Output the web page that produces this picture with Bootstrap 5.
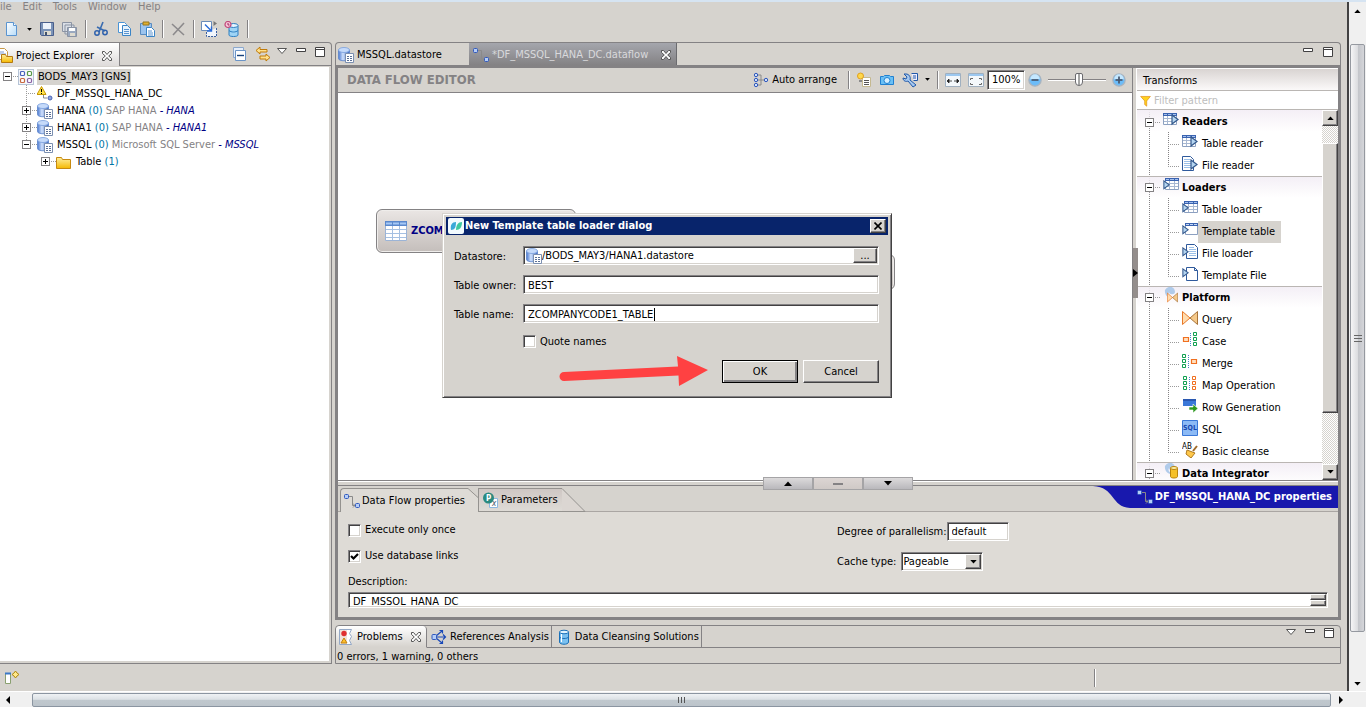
<!DOCTYPE html>
<html lang="en">
<head>
<meta charset="utf-8">
<meta name="viewport" content="width=device-width, initial-scale=1">
<title>DF_MSSQL_HANA_DC - Data Flow Editor</title>
<link href="https://cdn.jsdelivr.net/npm/bootstrap@5.3.0/dist/css/bootstrap.min.css" rel="stylesheet">
<style>
:root{--face:#d6d3ce;--edge:#848284;--dark:#424142;--navy:#08246b}
body{font-family:"DejaVu Sans Condensed","DejaVu Sans",sans-serif;font-size:11px;line-height:14px;color:#000;background:var(--face)}
svg{display:block;flex:none}
button,input,select,textarea{font:inherit;color:inherit;border-radius:0;outline:0}
button{background:none;border:0;padding:0}
a{color:inherit;text-decoration:none}
.ic{width:16px;height:16px}
.g7{gap:7px}.g3{gap:3px}
.grow0{min-height:0;min-width:0}
.skyline{height:2px;background:#d6e4f2}
.app{border-right:2px solid var(--dark)}
.menus{height:14px;gap:11px;color:var(--edge);line-height:10px}
.tools{height:26px;padding-left:4px}
.vsep{width:2px;height:18px;background:linear-gradient(90deg,var(--edge) 50%,#fff 50%);margin-right:-1px}
.work{gap:3px;padding-right:6px}
/* project explorer */
.explorer{width:332px;border-top:1px solid var(--edge);border-right:1px solid var(--edge);border-bottom:1px solid var(--edge);border-top-right-radius:4px}
.phead{height:24px}
.ptab{height:23px;background:linear-gradient(#fff,#dedbda);border-right:1px solid var(--edge);padding-right:6px;padding-top:2px;gap:7px}
.pline{border-bottom:1px solid var(--edge);height:23px;padding-right:3px}
.tree{background:#fff;margin-right:2px;margin-bottom:2px;padding-top:1px}
.tree ul{list-style:none;margin:0;padding:0}
.trow{height:17px;gap:4px}
.lv0{padding-left:3px}.lv1{padding-left:22px}.lv2{padding-left:41px}
.kids{background:repeating-linear-gradient(#9a9a9a 0 1px,transparent 1px 2px) 26px 0/1px 61px no-repeat}
.hd{width:5px;height:1px;margin-left:-3px;margin-right:-4px;background:repeating-linear-gradient(90deg,#9a9a9a 0 1px,transparent 1px 2px)}
.hd.wide{width:10px;margin-left:4px;margin-right:-3px}
.ex{width:9px;height:9px;border:1px solid var(--edge);background:linear-gradient(#000,#000) 1px 3px/5px 1px no-repeat #fff;flex:none}
.ex.plus{background:linear-gradient(#000,#000) 1px 3px/5px 1px no-repeat,linear-gradient(#000,#000) 3px 1px/1px 5px no-repeat #fff}
.picked{background:var(--face);padding:1px;margin-left:-1px}
.cnt{color:#0075a5}.kind{color:#848284}.conn{color:#000084;font-style:italic}
/* editor */
.frame{border-top:1px solid var(--edge);border-left:1px solid var(--edge);border-right:1px solid var(--edge);border-radius:4px 4px 0 0}
.etabs{height:22px}
.etab{width:133px;padding-left:2px;padding-top:2px;gap:3px}
.etab.on{width:208px;background:linear-gradient(#a5a6ad,#848284);color:#d9d9dc;border-right:1px solid #6b6b6f;padding-left:4px}
.inner{border:3px solid var(--edge);border-left-width:2px;border-right-width:2px}
.ehead{height:25px;border-bottom:1px solid var(--edge);padding-left:9px;padding-right:6px;padding-bottom:1px}
.ehead h1{font-size:13px;font-weight:700;color:var(--edge);margin:0;line-height:16px}
.sunk{background:#fff;border:1px solid;border-color:#848284 #fff #fff #848284;box-shadow:inset 1px 1px #424142,inset -1px -1px #d6d3ce}
.raised{background:var(--face);border:1px solid;border-color:#fff #424142 #424142 #fff;box-shadow:inset -1px -1px #848284}
.zoombox{width:38px;height:20px;padding:0 0 0 4px}
.slide{appearance:none;width:58px;height:14px;background:linear-gradient(#fff,#fff) 0 7px/100% 1px no-repeat,linear-gradient(var(--edge),var(--edge)) 0 6px/100% 1px no-repeat;margin:0 3px}
.slide::-webkit-slider-thumb{appearance:none;width:8px;height:13px;border:1px solid #6b6b6f;border-radius:2px 2px 4px 4px;background:linear-gradient(90deg,#fff 30%,#a5a6a5 30% 70%,#fff 70%)}
.canvas{background:#fff}
.node{border:1px solid var(--edge);border-radius:6px;background:linear-gradient(#eae6e4,#c4bebb);box-shadow:inset 0 0 0 1px #efedeb}
.sash{width:5px;background:var(--face);border-left:1px solid var(--edge);border-right:1px solid #fff}
.knob{left:0;top:180px;width:5px;height:50px;background:#948e8c}
/* dialog */
.dlg{left:104px;top:120px;width:450px;height:185px;background:var(--face);border:1px solid;border-color:#d6d3ce #424142 #424142 #d6d3ce;box-shadow:inset 1px 1px #fff,inset -1px -1px #848284;padding:3px}
.dlg label{padding-top:2px}
.dtitle{height:18px;background:var(--navy);color:#fff;font-weight:700;padding:0 2px;gap:1px}
.xbtn{width:16px;height:14px}
.dbody{padding:11px 9px 0 8px;gap:10px}
.dfield{height:19px}
.dfield label{width:69px}
.dfield .sunk{height:19px;padding:1px 4px 0}
.dfield div.sunk{padding:0 4px 0 2px}
.dots{width:24px;height:15px;margin-right:-3px}
.dbtns{gap:5px;padding-top:1px}
.dbtn{width:76px;height:23px}
.dbtn.main{outline:1px solid #000;outline-offset:-1px;border-color:#000;box-shadow:inset 1px 1px #fff,inset -2px -2px #848284}
.caretbar{position:absolute;left:211px;top:94px;width:1px;height:13px;background:#000}
.arrow{left:115px;top:141px}
.cb{appearance:none;width:13px;height:13px;margin:0;flex:none}
.cb:checked{background:#fff url("data:image/svg+xml,%3Csvg xmlns='http://www.w3.org/2000/svg' width='11' height='11'%3E%3Cpath d='M2 5l2.500 2.500L9 3' fill='none' stroke='black' stroke-width='2.200'/%3E%3C/svg%3E") 0 0 no-repeat}
/* palette */
.pal{width:201px;background:#fff}
.ptitle{height:23px;background:linear-gradient(#d9d4d2,#fbf9f9);border-top:1px solid #fff;border-bottom:1px solid #bab6b3;padding-left:6px;padding-top:2px}
.pfilter{height:19px;border-bottom:1px solid #bab6b3;padding-left:2px;padding-top:1px;gap:2px}
.pfilter input{border:0;width:150px;padding:0;background:none}
.pfilter input::placeholder{color:#bdbdbd;opacity:1}
.cats{background:repeating-linear-gradient(#848284 0 1px,transparent 1px 2px) 12px 0/1px 100% no-repeat}
.cat+.cat{border-top:1px solid #bab6b3}
.chead{height:22px;padding-left:8px;padding-top:2px;font-weight:700;background:linear-gradient(#f4eff6,transparent)}
.cat+.cat .chead{height:21px;padding-top:0}
.chead,.crow{gap:4px}
.chead .ic,.crow .ic{margin-bottom:5px}
.chead .ic{margin-left:3px;margin-right:-1px}
.crow{height:22px;padding-left:31px;padding-top:2px}
.crow .ic{margin-left:3px}
.crow .hd{width:11px;margin-left:0;margin-right:-4px}
.crows{background:repeating-linear-gradient(#848284 0 1px,transparent 1px 2px) 31px 0/1px calc(100% - 10px) no-repeat}
.crow .picked{padding:4px 6px 4px 4px;margin-left:-4px}
.sb{width:16px;background:repeating-conic-gradient(#fff 0 25%,#d6d3ce 0 50%) 0 0/2px 2px}
.sb .raised{width:16px}
/* properties */
.hsash{height:6px;background:var(--face);border-top:1px solid var(--edge);border-bottom:1px solid var(--edge);box-shadow:inset 0 1px #fff}
.knobs{left:425px;top:-4px}
.knobs button{width:50px;height:13px;background:linear-gradient(#dcdadb,#b9b8bc);border:1px solid #a5a4a6;line-height:9px}
.knobs button:nth-child(2){background:linear-gradient(#dcd5d3,#cfc9c6)}
.ptabs{height:26px;padding-top:2px;padding-left:2px;background:linear-gradient(#aaa6a3,#aaa6a3) 0 100%/100% 1px no-repeat}
.pt1{height:24px;background:#dedbd6;border-left:1px solid #94928f;border-top:1px solid #94928f;border-top-left-radius:4px;padding-left:3px;width:128px;gap:2px}
.pt2{height:24px;background:linear-gradient(#cfc7c4,#dedbd6);border:1px solid #94928f;border-right:0;padding-left:4px;width:84px;gap:2px}
.banner{height:22px;background:#1818ad;color:#fff;font-weight:700;padding-right:6px;gap:2px}
.pbody{background:#dedbd6;height:105px;padding:11px 10px 10px}
.desc{height:16px;margin-top:3px}
.desc textarea{resize:none;border:0;background:none;height:11px;line-height:16px;overflow:hidden;padding:0 4px;margin-top:1px}
.spin{width:16px;height:6px}
/* problems */
.problems{border:1px solid var(--edge);border-radius:4px 4px 0 0;height:39px;margin-top:5px}
.btabs{height:22px}
.btab{border-right:1px solid var(--edge);border-bottom:1px solid var(--edge);padding:0 2px 0 4px;gap:3px}
.btab.on{background:linear-gradient(#fff,var(--face));border-bottom-color:var(--face);width:91px;border-radius:4px 4px 0 0;padding-left:2px}
.bfill{border-bottom:1px solid var(--edge);padding-right:3px}
.msg{height:15px;line-height:18px;padding-left:1px;overflow:hidden}
.status{height:27px;padding-left:4px;padding-right:252px}
/* outer scroll bars */
.vs{width:17px;background:#f0f0f0;padding:7px 0 5px}
.vthumb{width:15px;border:1px solid #9599a0;border-radius:2px;background:linear-gradient(90deg,#f5f5f6,#dcdde0 50%,#c3c5ca 55%,#d5d6da)}
.hs{height:16px;background:#f0f0f0;border-top:1px solid #fff}
.hthumb{height:14px;border:1px solid #8b95a1;border-radius:2px;background:linear-gradient(#eff2f4,#dce1e5 45%,#c0c8ce 50%,#bcc4cb)}
</style>
</head>
<body class="vh-100 overflow-hidden d-flex flex-column">

<svg width="0" height="0" class="position-absolute" aria-hidden="true">
<defs>
<linearGradient id="cyl"><stop offset="0" stop-color="#4a78d0"/><stop offset=".4" stop-color="#cfe0fb"/><stop offset="1" stop-color="#3a66c4"/></linearGradient>
<linearGradient id="page" x2="1" y2="1"><stop offset="0" stop-color="#fff"/><stop offset="1" stop-color="#b8dcf8"/></linearGradient>
<linearGradient id="gold" x2="0" y2="1"><stop offset="0" stop-color="#fff0a0"/><stop offset="1" stop-color="#f5b800"/></linearGradient>
<symbol id="db" viewBox="0 0 16 16"><path d="M.5 3v8.500c0 3 11 3 11 0V3z" fill="url(#cyl)" stroke="#5a84cc" stroke-width=".8"/><ellipse cx="6" cy="3" rx="5.500" ry="2.500" fill="#c5dafa" stroke="#7a9fdc" stroke-width=".8"/><path d="M7.500 6.500h8v9h-8z" fill="#fff" stroke="#7b8fb0"/><path d="M9 9.500h2m1 0h2m-5 2h2m1 0h2m-5 2h2m1 0h2" stroke="#5a6f96"/></symbol>
<symbol id="flow" viewBox="0 0 16 16"><path d="M5 3.500h3.500v9H11" fill="none" stroke="#8a8a8a"/><path d="M9 10.500l2 2-2 2" fill="none" stroke="#8a8a8a"/><rect x=".5" y="1.500" width="4" height="4" rx="1" fill="#b5cdf7" stroke="#3159bd"/><rect x="11.500" y="10.500" width="4" height="4" rx="1" fill="#b5cdf7" stroke="#3159bd"/></symbol>
<symbol id="warn" viewBox="0 0 16 16"><path d="M6.500 8v4H10" fill="none" stroke="#8a8a8a"/><rect x="11" y="10" width="4" height="4" rx="2" fill="#8ca6e0" stroke="#4a63b5"/><path d="M4.500 .5l4.500 8H0z" fill="#ffe34a" stroke="#c79600"/><path d="M4.500 3v3m0 1v1" stroke="#000"/></symbol>
<symbol id="proj" viewBox="0 0 16 16"><rect x=".5" y=".5" width="15" height="15" fill="#f5f7fb" stroke="#b5c3d6"/><g fill="#fff" stroke-width="1.200"><rect x="2.500" y="2.500" width="4" height="4" rx="1" stroke="#4a63bd"/><rect x="9.500" y="2.500" width="4" height="4" rx="1" stroke="#5a9a4a"/><rect x="2.500" y="9.500" width="4" height="4" rx="1" stroke="#c76a42"/><rect x="9.500" y="9.500" width="4" height="4" rx="1" stroke="#8a63a5"/></g></symbol>
<symbol id="folder" viewBox="0 0 16 16"><path d="M.5 3.500h5l1 2h8v9H.5z" fill="url(#gold)" stroke="#c78a10"/></symbol>
<symbol id="folders" viewBox="0 0 16 16"><path d="M1.500 .5h6l3 3v8h-9z" fill="#fff" stroke="#c79a4a"/><path d="M3 4h4M3 6h6" stroke="#7a9ad0"/><path d="M4.500 6.500h4l1 2h6v6h-11z" fill="url(#gold)" stroke="#b57a10"/></symbol>
<symbol id="new" viewBox="0 0 16 16"><path d="M2.500 1.500h7l3 3v10h-10z" fill="url(#page)" stroke="#5a94d0"/><path d="M9.500 1.500v3h3" fill="#fff" stroke="#5a94d0"/></symbol>
<symbol id="save" viewBox="0 0 16 16"><path d="M1.500 1.500h13v13h-12l-1-1z" fill="#7b93b8" stroke="#4a5f8c"/><path d="M4 2h8v6H4z" fill="#eef3fb"/><path d="M5 10h7v4H5z" fill="#dedbd0"/><path d="M6 11h2v3H6z" fill="#42526b"/></symbol>
<symbol id="saveall" viewBox="0 0 16 16"><g fill="#d9dee6" stroke="#8a93a3"><path d="M.5 1.500h9v9h-9zM3 4h9v9H3z"/><path d="M5.500 6.500h9v9h-9z" fill="#9aa9c0"/></g><path d="M7 7h6v3H7z" fill="#fff"/><path d="M8 12h5v3H8z" fill="#dedbd0"/></symbol>
<symbol id="cut" viewBox="0 0 16 16"><path d="M10 1L6 11M4 6l8 4" stroke="#3a6cb0" stroke-width="1.600"/><circle cx="4" cy="12" r="2.200" fill="none" stroke="#2f62ad" stroke-width="1.500"/><circle cx="12" cy="11.500" r="2.200" fill="none" stroke="#2f62ad" stroke-width="1.500"/></symbol>
<symbol id="copy" viewBox="0 0 16 16"><path d="M2.500 1.500h6l2 2v8h-8z" fill="#fff" stroke="#4a94d6"/><path d="M6.500 4.500h5l3 3v7h-8z" fill="#e5f2fd" stroke="#3a84c6"/><path d="M8 8.500h5M8 10.500h5M8 12.500h5" stroke="#5a94d0"/></symbol>
<symbol id="paste" viewBox="0 0 16 16"><path d="M1.500 2.500h11v11h-11z" fill="#9cc4ee" stroke="#5a8cc0"/><path d="M4 1h6v3H4z" fill="#e0b030" stroke="#96741c"/><path d="M7.500 6.500h5l3 3v6h-8z" fill="#fff" stroke="#3a84c6"/><path d="M9 10h4m-4 2h5m-5 2h5" stroke="#5a94d0"/></symbol>
<symbol id="del" viewBox="0 0 16 16"><path d="M2 3l12 11M14 2L3 14" stroke="#8c8a8c" stroke-width="1.600"/></symbol>
<symbol id="act" viewBox="0 0 16 16"><path d="M.5 .5h10v9H.5z" fill="#fff" stroke="#6b8cb8"/><path d="M15.500 7v8.500h-10V11" fill="#f2f6fc" stroke="#3a5fa0" stroke-dasharray="2 1"/><path d="M4 3.500l6 6m.5-4v4.500H6" fill="none" stroke="#2a6cd8" stroke-width="1.400"/><path d="M12.500 0L16 2.500 12.500 5z" fill="#777"/></symbol>
<symbol id="dbclock" viewBox="0 0 16 16"><path d="M5 4.500V14c0 2 9 2 9 0V4.500z" fill="#9fd4f5" stroke="#2f7fc0"/><ellipse cx="9.500" cy="4.500" rx="4.500" ry="2" fill="#e5f5ff" stroke="#2f7fc0"/><path d="M5 9.500c2 2 7 2 9 0" fill="none" stroke="#2f7fc0"/><circle cx="4" cy="3.500" r="3" fill="#f7c5d8" stroke="#c0487a" stroke-width="1.200"/><path d="M4 2v2h1.500" fill="none" stroke="#a02a60"/></symbol>
<symbol id="collapse" viewBox="0 0 16 16"><path d="M1.500 1.500h10v10h-10z" fill="#e5eefa" stroke="#8ca8cc"/><path d="M3.500 4.500h10v10h-10z" fill="#fff" stroke="#6b94c6"/><path d="M5 9.500h7" stroke="#18427b" stroke-width="1.400"/></symbol>
<symbol id="link" viewBox="0 0 16 16"><path d="M5 1L1 4.500 5 8V6h7V3.500H5zM11 8l4 3.500-4 3.500v-2H5v-3h6z" fill="#ffe08a" stroke="#c07a08"/></symbol>
<symbol id="tri" viewBox="0 0 16 16"><path d="M3.500 4.500h9l-4.500 5z" fill="#fff" stroke="#555"/></symbol>
<symbol id="min" viewBox="0 0 16 16"><path d="M3.500 4.500h9v3h-9z" fill="#fff" stroke="#424142"/></symbol>
<symbol id="max" viewBox="0 0 16 16"><path d="M3.500 3.500h9v9h-9z" fill="#fff" stroke="#424142"/><path d="M3 5.500h10" stroke="#424142"/></symbol>
<symbol id="close" viewBox="0 0 12 12"><path d="M1.500 1.500h2L6 4.500l2.500-3h2v2L7.700 6l2.800 2.500v2h-2L6 7.500l-2.500 3h-2v-2L4.300 6 1.500 3.500z" fill="#fff" stroke="#555"/></symbol>
<symbol id="auto" viewBox="0 0 16 16"><path d="M5 3h3v10H5M5 8h6" fill="none" stroke="#8a8a8a"/><g fill="#d0e0fa" stroke="#3159bd"><circle cx="3" cy="3" r="1.700"/><circle cx="3" cy="8" r="1.700"/><circle cx="3" cy="13" r="1.700"/><circle cx="13" cy="8" r="1.700"/></g></symbol>
<symbol id="tip" viewBox="0 0 16 16"><path d="M6.500 5.500h8v9h-8z" fill="#fff" stroke="#c5b990"/><path d="M8 8.500h5m-5 2h5m-5 2h5" stroke="#555"/><circle cx="4.500" cy="4" r="3" fill="#ffd84a" stroke="#e0a020"/><path d="M3 8h3v2H3z" fill="#8a8a8a"/></symbol>
<symbol id="cam" viewBox="0 0 16 16"><path d="M1.500 4.500h3l1-1h5l1 1h3v8h-13z" fill="#6ac0f5" stroke="#2080d0"/><circle cx="8" cy="8.500" r="3" fill="#d5efff" stroke="#2080d0"/></symbol>
<symbol id="wrench" viewBox="0 0 16 16"><path d="M2 2l3 3-1 2-3-1c0 3 3 4 5 3l5 6 3-2-6-5c1-3-1-6-4-6z" fill="#a5c8f0" stroke="#2058a8"/><path d="M9.500 1.500h6v7h-4" fill="#eef" stroke="#2058a8"/><path d="M11 4h3m-3 2h3" stroke="#2058a8"/></symbol>
<symbol id="fitw" viewBox="0 0 16 16"><path d="M.5 1.500h15v13H.5z" fill="#f4f8fb" stroke="#a0b0c0"/><path d="M1 3h14" stroke="#9cc8f0" stroke-width="2"/><path d="M4 7L2 9l2 2zM12 7l2 2-2 2zM3 9h4m2 0h4" fill="#222" stroke="#222" stroke-width=".8"/></symbol>
<symbol id="fitp" viewBox="0 0 16 16"><path d="M.5 1.500h15v13H.5z" fill="#f4f8fb" stroke="#a0b0c0"/><path d="M1 3h14" stroke="#9cc8f0" stroke-width="2"/><path d="M2.500 8V6.500H5m6 0h2.500V8m0 3v1.500H11m-6 0H2.500V11" fill="none" stroke="#666"/></symbol>
<symbol id="zm" viewBox="0 0 16 16"><circle cx="8" cy="8" r="7" fill="#6cbcf8" stroke="#a8b4c0" stroke-width="1.500"/><path d="M2.500 7a5.500 5.500 0 0 1 11 0z" fill="#c5e8ff"/><path d="M4 8h8" stroke="#4a5a70" stroke-width="2"/></symbol>
<symbol id="zp" viewBox="0 0 16 16"><use href="#zm"/><path d="M8 4v8" stroke="#4a5a70" stroke-width="2"/></symbol>
<symbol id="funnel" viewBox="0 0 16 16"><path d="M2 3h12L9.500 8.500V15L7 13V8.500z" fill="#ffd21e" stroke="#e08a10" stroke-width=".8"/></symbol>
<symbol id="tbl" viewBox="0 0 16 16"><path d="M.5 2.500h13v11H.5z" fill="#fff" stroke="#8ca0c0"/><path d="M0 3.500h14" stroke="#3a63b0" stroke-width="3"/><path d="M1 7.500h12M1 10.500h12M4.500 5v8M9.500 5v8" stroke="#a8b8d2"/><path d="M1 3.500h3m1 0h4m1 0h3" stroke="#a5c0ee"/></symbol>
<symbol id="tblbig" viewBox="0 0 22 20"><path d="M.5 .5h21v19H.5z" fill="#fff" stroke="#9cb4d6"/><path d="M0 0h22v5H0z" fill="#5a88cc"/><path d="M1 2.500h6m1 0h6m1 0h6" stroke="#a5c8f5" stroke-width="2"/><path d="M1 8.500h20m-20 4h20m-20 4h20M7.500 5v14m7-14v14" stroke="#a5c0e2"/></symbol>
<symbol id="pl" viewBox="0 0 16 16"><path d="M1 1l6 4.500L1 10z" fill="#b5d5f0" stroke="#34588c" stroke-width="1.200"/></symbol>
<symbol id="rtbl" viewBox="0 0 16 16"><use href="#tbl" width="16" height="16" y="-1"/><use href="#pl" width="16" height="16" x="8" y="2"/></symbol>
<symbol id="ltbl" viewBox="0 0 16 16"><use href="#tbl" width="16" height="16" x="2" y="-1"/><use href="#pl" width="14" height="14" x="0" y="3"/></symbol>
<symbol id="ltpl" viewBox="0 0 16 16"><path d="M3.500 1.500h12v11h-12z" fill="#fff" stroke="#8ca0c0"/><path d="M3 2.500h13" stroke="#3a63b0" stroke-width="3"/><path d="M4 2.500h3m1 0h3m1 0h3" stroke="#c5d8f6"/><use href="#pl" width="14" height="14" x="0" y="3"/></symbol>
<symbol id="rfile" viewBox="0 0 16 16"><path d="M.5 .5h8l3 3v11H.5z" fill="#fff" stroke="#2f5a9c"/><path d="M2 3.500h6m-6 2h7m-7 2h7m-7 2h7m-7 2h7" stroke="#9cc0e8"/><use href="#pl" width="16" height="16" x="8" y="3"/></symbol>
<symbol id="lfile" viewBox="0 0 16 16"><path d="M4.500 .5h8l3 3v11h-11z" fill="#fff" stroke="#2f5a9c"/><path d="M7 3.500h5m-5 2h7m-7 2h7m-7 2h7m-7 2h7" stroke="#9cc0e8"/><use href="#pl" width="14" height="14" x="0" y="3"/></symbol>
<symbol id="tfile" viewBox="0 0 16 16"><path d="M4.500 1.500h8l3 3v10h-11z" fill="#fff" stroke="#2f5a9c"/><path d="M12.500 1.500v3h3" fill="none" stroke="#2f5a9c"/><use href="#pl" width="14" height="14" x="0" y="2"/></symbol>
<symbol id="bow" viewBox="0 0 16 16"><path d="M.5 1.500v13L8 8z" fill="#ffdcae" stroke="#e87828"/><path d="M15.500 1.500v13L8 8z" fill="#f5c98a" stroke="#a8743a"/></symbol>
<symbol id="plat" viewBox="0 0 16 16"><path d="M2 3C5-2 12-1 12 5c0 3-6 3-6 0-2 4 3 6 6 5-3 3-11 0-10-7z" fill="#b0cbea"/><use href="#bow" width="11" height="11" x="4" y="5"/></symbol>
<symbol id="dint" viewBox="0 0 16 16"><path d="M2 3C5-2 12-1 12 5c0 3-6 3-6 0-2 4 3 6 6 5-3 3-11 0-10-7z" fill="#b0cbea"/><path d="M7.500 5v8.500c0 2 7 2 7 0V5z" fill="#f5c02a" stroke="#b88410"/><ellipse cx="11" cy="5" rx="3.500" ry="1.500" fill="#fff0a5" stroke="#b88410"/></symbol>
<symbol id="g3" viewBox="0 0 5 16"><path d="M.5 .5h3v3h-3zm0 5h3v3h-3zm0 5h3v3h-3z" fill="#fff" stroke="currentColor"/></symbol>
<symbol id="case" viewBox="0 0 16 16"><path d="M1.500 5.500h5v4h-5z" fill="#ffe0c0" stroke="#f07020" stroke-width="1.200"/><path d="M8.500 1v14" stroke="#4a84c6" stroke-dasharray="1 1"/><use href="#g3" width="5" height="16" x="11" color="#10a050"/></symbol>
<symbol id="merge" viewBox="0 0 16 16"><use href="#g3" width="5" height="16" x="0" color="#10a050"/><path d="M6.500 1v14" stroke="#4a84c6" stroke-dasharray="1 1"/><path d="M9.500 5.500h5v4h-5z" fill="#ffe0c0" stroke="#f07020" stroke-width="1.200"/></symbol>
<symbol id="mapop" viewBox="0 0 16 16"><use href="#g3" width="5" height="16" x="1" color="#10a050"/><path d="M7.500 1v14" stroke="#4a84c6" stroke-dasharray="1 1"/><use href="#g3" width="5" height="16" x="10" color="#f07020"/></symbol>
<symbol id="rowgen" viewBox="0 0 16 16"><path d="M1 1h13v7H1z" fill="#3a78d8"/><path d="M1 1h13v2H1z" fill="#2a58b0"/><path d="M7 9h4V6l5 4.500L11 15v-3H7z" fill="#2f9a20" stroke="#fff" stroke-width=".6"/></symbol>
<symbol id="sqli" viewBox="0 0 16 16"><path d="M.5 .5h15v15H.5z" fill="#8cbaf5" stroke="#3a78d8"/><text x="1" y="10" font-size="7" font-weight="bold" fill="#1848b0">SQL</text></symbol>
<symbol id="clean" viewBox="0 0 16 16"><text x="0" y="7" font-size="8" fill="#000">AB</text><path d="M15 4l-4 5" stroke="#a06a28" stroke-width="2"/><path d="M5 8l8 3-4 5-5-4z" fill="#ffc84a" stroke="#b07a20"/></symbol>
<symbol id="param" viewBox="0 0 16 16"><path d="M6.500 6.500h8v9h-8z" fill="#fff" stroke="#8cb8e0"/><text x="9" y="14" font-size="8" font-style="italic" fill="#456">x</text><circle cx="5.500" cy="6" r="5.500" fill="#2a8a80"/><text x="3" y="9" font-size="8" font-weight="bold" fill="#fff">P</text></symbol>
<symbol id="prob" viewBox="0 0 16 16"><path d="M1.500 .5h12l-2 4 2 3-2 4 2 4h-12z" fill="#fff" stroke="#94a8c6"/><path d="M2 1h7v14H2z" fill="#f0e2d8"/><circle cx="6" cy="4.500" r="2.700" fill="#e03030"/><path d="M6 9l3 5H3z" fill="#ffc02a" stroke="#c08010"/></symbol>
<symbol id="refs" viewBox="0 0 16 16"><path d="M4 8h10M12 5.500L14.500 8 12 10.500M5 7l6-5M8.500 1.500h3v3M5 9l6 5m-2.500 .5h3v-3" fill="none" stroke="#1848b8" stroke-width="1.200"/><rect x="1" y="5.500" width="4.500" height="5" rx="1" fill="#b5cdf7" stroke="#3159bd"/></symbol>
<symbol id="cyl2" viewBox="0 0 16 16"><path d="M3.500 3v10c0 3 9 3 9 0V3z" fill="#7ac0f0" stroke="#1a70b8"/><ellipse cx="8" cy="3" rx="4.500" ry="1.800" fill="#e0f4ff" stroke="#1a70b8"/><path d="M3.500 8c1 2 8 2 9 0" fill="none" stroke="#1a70b8"/><path d="M5.500 5v8" stroke="#fff"/></symbol>
<symbol id="fast" viewBox="0 0 16 16"><path d="M1.500 3.500h5v10h-5z" fill="#fff" stroke="#8aa070"/><path d="M1 3.500h6" stroke="#3a78c8" stroke-width="2"/><path d="M11.500 1l1.500 2 2 1.500-2 1.500-1.500 2L10 6 8 4.500 10 3z" fill="#ffe88a" stroke="#b08a10"/></symbol>
<symbol id="logo" viewBox="0 0 16 16"><rect width="16" height="16" rx="2" fill="#f2fafe"/><path d="M3 12c-1-5 1-8 5-8 0 5-1 8-5 8z" fill="#3aa8d8"/><path d="M8 12c0-5 2-8 6-8 0 5-2 8-6 8z" fill="#40c8a0"/></symbol>
<symbol id="dn" viewBox="0 0 8 5"><path d="M0 0h8L4 4.500z"/></symbol>
<symbol id="up" viewBox="0 0 8 5"><path d="M0 5h8L4 .5z"/></symbol>
</defs>
</svg>

<div class="skyline"></div>
<div class="d-flex flex-grow-1 grow0">
<div class="app d-flex flex-column flex-grow-1 grow0">
  <nav class="menus d-flex"><a href="#">ile</a><a href="#">Edit</a><a href="#">Tools</a><a href="#">Window</a><a href="#">Help</a></nav>
  <div class="tools d-flex align-items-center g7">
    <button aria-label="New"><svg class="ic"><use href="#new"/></svg></button>
    <svg width="5" height="3"><use href="#dn"/></svg>
    <button aria-label="Save"><svg class="ic"><use href="#save"/></svg></button>
    <button aria-label="Save all"><svg class="ic"><use href="#saveall"/></svg></button>
    <i class="vsep"></i>
    <button aria-label="Cut"><svg class="ic"><use href="#cut"/></svg></button>
    <button aria-label="Copy"><svg class="ic"><use href="#copy"/></svg></button>
    <button aria-label="Paste"><svg class="ic"><use href="#paste"/></svg></button>
    <i class="vsep"></i>
    <button aria-label="Delete"><svg class="ic"><use href="#del"/></svg></button>
    <i class="vsep"></i>
    <button aria-label="Execute"><svg class="ic"><use href="#act"/></svg></button>
    <button aria-label="Schedule"><svg class="ic"><use href="#dbclock"/></svg></button>
    <i class="vsep"></i>
  </div>

  <div class="work d-flex flex-grow-1 grow0">
    <aside class="explorer d-flex flex-column flex-shrink-0">
      <div class="phead d-flex">
        <div class="ptab d-flex align-items-center"><span class="d-flex align-items-center g3"><svg width="13" height="16" viewBox="3 0 13 16"><use href="#folders" width="16" height="16"/></svg>Project Explorer</span><svg width="12" height="12"><use href="#close"/></svg></div>
        <div class="pline flex-grow-1 d-flex justify-content-end align-items-center g3">
          <svg class="ic me-1"><use href="#collapse"/></svg><svg class="ic"><use href="#link"/></svg><svg class="ic mb-1"><use href="#tri"/></svg><svg class="ic mb-1"><use href="#min"/></svg><svg class="ic mb-1"><use href="#max"/></svg>
        </div>
      </div>
      <div class="tree flex-grow-1">
        <ul>
          <li><div class="trow lv0 d-flex align-items-center"><i class="ex"></i><i class="hd"></i><svg class="ic"><use href="#proj"/></svg><span class="picked">BODS_MAY3 [GNS]</span></div>
            <ul class="kids">
              <li class="trow lv1 d-flex align-items-center"><i class="hd wide"></i><svg class="ic"><use href="#warn"/></svg><span>DF_MSSQL_HANA_DC</span></li>
              <li class="trow lv1 d-flex align-items-center"><i class="ex plus"></i><i class="hd"></i><svg class="ic"><use href="#db"/></svg><span>HANA <span class="cnt">(0)</span> <span class="kind">SAP HANA</span> <span class="conn">- HANA</span></span></li>
              <li class="trow lv1 d-flex align-items-center"><i class="ex plus"></i><i class="hd"></i><svg class="ic"><use href="#db"/></svg><span>HANA1 <span class="cnt">(0)</span> <span class="kind">SAP HANA</span> <span class="conn">- HANA1</span></span></li>
              <li class="trow lv1 d-flex align-items-center"><i class="ex"></i><i class="hd"></i><svg class="ic"><use href="#db"/></svg><span>MSSQL <span class="cnt">(0)</span> <span class="kind">Microsoft SQL Server</span> <span class="conn">- MSSQL</span></span></li>
              <li class="trow lv2 d-flex align-items-center"><i class="ex plus"></i><i class="hd"></i><svg class="ic"><use href="#folder"/></svg><span>Table <span class="cnt">(1)</span></span></li>
            </ul>
          </li>
        </ul>
      </div>
    </aside>

    <main class="d-flex flex-column flex-grow-1 grow0">
      <section class="frame d-flex flex-column flex-grow-1 grow0">
        <div class="etabs d-flex align-items-center">
          <div class="etab d-flex align-items-center h-100"><svg class="ic"><use href="#db"/></svg>MSSQL.datastore</div>
          <div class="etab on d-flex align-items-center h-100"><svg class="ic"><use href="#flow"/></svg><span class="flex-grow-1">*DF_MSSQL_HANA_DC.dataflow</span><svg width="12" height="12" class="me-1"><use href="#close"/></svg></div>
          <div class="flex-grow-1"></div>
          <svg class="ic mb-1"><use href="#min"/></svg><svg class="ic mb-1 ms-1 me-1"><use href="#max"/></svg>
        </div>
        <div class="inner d-flex flex-column flex-grow-1 grow0">
          <div class="d-flex flex-grow-1 grow0">
            <div class="d-flex flex-column flex-grow-1 grow0">
              <div class="ehead d-flex align-items-center g7">
                <h1 class="flex-grow-1">DATA FLOW EDITOR</h1>
                <button class="d-flex align-items-center g3 me-1"><svg class="ic"><use href="#auto"/></svg>Auto arrange</button>
                <i class="vsep"></i>
                <button aria-label="Hints"><svg class="ic"><use href="#tip"/></svg></button>
                <button aria-label="Snapshot"><svg class="ic"><use href="#cam"/></svg></button>
                <button aria-label="Settings"><svg class="ic"><use href="#wrench"/></svg></button>
                <svg width="5" height="3"><use href="#dn"/></svg>
                <i class="vsep"></i>
                <button aria-label="Fit width"><svg class="ic"><use href="#fitw"/></svg></button>
                <div class="d-flex align-items-center g3">
                  <button aria-label="Fit page"><svg class="ic"><use href="#fitp"/></svg></button>
                  <input class="zoombox sunk" value="100%" aria-label="Zoom">
                  <svg width="14" height="14"><use href="#zm"/></svg>
                  <input type="range" class="slide" value="54" aria-label="Zoom level">
                  <svg width="14" height="14"><use href="#zp"/></svg>
                </div>
              </div>
              <div class="canvas flex-grow-1 position-relative">
                <div class="node position-absolute d-flex align-items-center" style="left:38px;top:116px;width:200px;height:44px;padding-left:8px"><svg class="me-1" width="22" height="20"><use href="#tblbig"/></svg><b style="color:#000084">ZCOM</b></div>
                <div class="node position-absolute" style="left:380px;top:161px;width:177px;height:36px"></div>
                <form class="dlg position-absolute" onsubmit="return false">
                  <div class="dtitle d-flex align-items-center"><svg class="ic"><use href="#logo"/></svg><span class="flex-grow-1">New Template table loader dialog</span><button type="button" class="xbtn raised d-flex align-items-center justify-content-center" aria-label="Close"><svg width="8" height="8"><path d="M.5 .5l7 7m0-7l-7 7" stroke="#000" stroke-width="1.600"/></svg></button></div>
                  <div class="dbody d-flex flex-column">
                    <div class="dfield d-flex align-items-center"><label for="ds">Datastore:</label><div class="sunk flex-grow-1 d-flex align-items-center"><svg class="ic"><use href="#db"/></svg><input id="ds" class="border-0 p-0 flex-grow-1 bg-transparent" value="/BODS_MAY3/HANA1.datastore"><button type="button" class="dots raised lh-1">...</button></div></div>
                    <div class="dfield d-flex align-items-center"><label for="own">Table owner:</label><input id="own" class="sunk flex-grow-1" value="BEST"></div>
                    <div class="dfield d-flex align-items-center"><label for="nam">Table name:</label><input id="nam" class="sunk flex-grow-1" value="ZCOMPANYCODE1_TABLE"></div>
                    <div class="d-flex align-items-center" style="padding-left:69px;gap:4px"><input type="checkbox" class="cb sunk" id="quo"><label for="quo">Quote names</label></div>
                    <div class="dbtns d-flex justify-content-end"><button class="dbtn main raised">OK</button><button type="button" class="dbtn raised">Cancel</button></div>
                  </div>
                  <i class="caretbar"></i>
                  <svg class="arrow position-absolute" width="151" height="32" viewBox="0 0 151 32"><path d="M6 17L120 11.500 119 1 150 15 121 31 120.500 20.500 6 26a4.500 4.500 0 0 1 0-9z" fill="#ff4142"/></svg>
                </form>
              </div>
            </div>
            <div class="sash position-relative"><div class="knob position-absolute d-flex align-items-center"><svg width="5" height="8"><path d="M0 0l5 4-5 4z"/></svg></div></div>
            <aside class="pal d-flex flex-column flex-shrink-0">
              <div class="ptitle d-flex align-items-center">Transforms</div>
              <div class="pfilter d-flex align-items-center"><svg width="13" height="13"><use href="#funnel"/></svg><input placeholder="Filter pattern" aria-label="Filter pattern"></div>
              <div class="d-flex flex-grow-1 grow0 overflow-hidden" style="height:0">
                <div class="cats flex-grow-1">
                  <div class="cat"><div class="chead d-flex align-items-center"><i class="ex"></i><i class="hd"></i><svg class="ic"><use href="#rtbl"/></svg>Readers</div>
                    <div class="crows">
                      <div class="crow d-flex align-items-center"><i class="hd"></i><svg class="ic"><use href="#rtbl"/></svg>Table reader</div>
                      <div class="crow d-flex align-items-center"><i class="hd"></i><svg class="ic"><use href="#rfile"/></svg>File reader</div>
                    </div></div>
                  <div class="cat"><div class="chead d-flex align-items-center"><i class="ex"></i><i class="hd"></i><svg class="ic"><use href="#ltbl"/></svg>Loaders</div>
                    <div class="crows">
                      <div class="crow d-flex align-items-center"><i class="hd"></i><svg class="ic"><use href="#ltbl"/></svg>Table loader</div>
                      <div class="crow d-flex align-items-center"><i class="hd"></i><svg class="ic"><use href="#ltpl"/></svg><span class="picked">Template table</span></div>
                      <div class="crow d-flex align-items-center"><i class="hd"></i><svg class="ic"><use href="#lfile"/></svg>File loader</div>
                      <div class="crow d-flex align-items-center"><i class="hd"></i><svg class="ic"><use href="#tfile"/></svg>Template File</div>
                    </div></div>
                  <div class="cat"><div class="chead d-flex align-items-center"><i class="ex"></i><i class="hd"></i><svg class="ic"><use href="#plat"/></svg>Platform</div>
                    <div class="crows">
                      <div class="crow d-flex align-items-center"><i class="hd"></i><svg class="ic"><use href="#bow"/></svg>Query</div>
                      <div class="crow d-flex align-items-center"><i class="hd"></i><svg class="ic"><use href="#case"/></svg>Case</div>
                      <div class="crow d-flex align-items-center"><i class="hd"></i><svg class="ic"><use href="#merge"/></svg>Merge</div>
                      <div class="crow d-flex align-items-center"><i class="hd"></i><svg class="ic"><use href="#mapop"/></svg>Map Operation</div>
                      <div class="crow d-flex align-items-center"><i class="hd"></i><svg class="ic"><use href="#rowgen"/></svg>Row Generation</div>
                      <div class="crow d-flex align-items-center"><i class="hd"></i><svg class="ic"><use href="#sqli"/></svg>SQL</div>
                      <div class="crow d-flex align-items-center"><i class="hd"></i><svg class="ic"><use href="#clean"/></svg>Basic cleanse</div>
                    </div></div>
                  <div class="cat"><div class="chead d-flex align-items-center"><i class="ex"></i><i class="hd"></i><svg class="ic"><use href="#dint"/></svg>Data Integrator</div></div>
                </div>
                <div class="sb d-flex flex-column flex-shrink-0">
                  <div class="raised d-flex align-items-center justify-content-center" style="height:16px"><svg width="7" height="4"><use href="#up"/></svg></div>
                  <div style="flex:17"></div><div class="raised" style="flex:270"></div><div style="flex:51"></div>
                  <div class="raised d-flex align-items-center justify-content-center" style="height:16px"><svg width="7" height="4"><use href="#dn"/></svg></div>
                </div>
              </div>
            </aside>
          </div>
          <div class="hsash position-relative"><div class="knobs position-absolute d-flex"><button aria-label="Up"><svg class="m-auto" width="8" height="5"><use href="#up"/></svg></button><button aria-label="Restore"><svg class="m-auto" width="10" height="2"><path d="M0 0h10v2H0z" fill="#848284"/></svg></button><button aria-label="Down"><svg class="m-auto" width="8" height="5"><use href="#dn"/></svg></button></div></div>
          <div class="ptabs d-flex">
            <div class="pt1 d-flex align-items-center"><svg class="ic"><use href="#flow"/></svg><span class="text-nowrap">Data Flow properties</span></div>
            <svg width="10" height="24"><path d="M0 0l10 10v14H0z" fill="#dedbd6"/><path d="M0 .5l10 9" stroke="#94928f"/></svg>
            <div class="pt2 d-flex align-items-center"><svg class="ic"><use href="#param"/></svg>Parameters</div>
            <svg width="24" height="24"><path d="M0 0l23 24H0z" fill="#dbd6d2"/><path d="M0 .5l23 23H0" fill="none" stroke="#94928f"/></svg>
            <div class="flex-grow-1"></div>
            <div class="d-flex" style="margin-top:-2px"><svg width="44" height="22"><path d="M0 0C22 1 18 21 37 22h7V0z" fill="#1818ad"/></svg><div class="banner d-flex align-items-center"><svg class="ic"><use href="#flow"/></svg>DF_MSSQL_HANA_DC properties</div></div>
          </div>
          <div class="pbody">
            <div class="d-flex">
              <div class="d-flex flex-column" style="width:489px;gap:12px">
                <div class="d-flex align-items-center gap-1"><input type="checkbox" class="cb sunk" id="once"><label for="once">Execute only once</label></div>
                <div class="d-flex align-items-center gap-1"><input type="checkbox" class="cb sunk" id="lnk" checked><label for="lnk">Use database links</label></div>
                <label for="dsc">Description:</label>
              </div>
              <div class="d-flex flex-column" style="gap:11px;margin-top:-1px">
                <div class="d-flex align-items-center"><label for="dop">Degree of parallelism:</label><input id="dop" class="sunk" style="width:62px;height:19px;padding:0 4px" value="default"></div>
                <div class="d-flex align-items-center" style="gap:5px"><label for="cch">Cache type:</label><div class="sunk d-flex" style="width:82px;height:19px;padding:1px"><select id="cch" class="border-0 bg-transparent flex-grow-1 p-0" style="appearance:none"><option>Pageable</option></select><span class="raised d-flex align-items-center justify-content-center" style="width:16px"><svg width="7" height="4"><use href="#dn"/></svg></span></div></div>
              </div>
            </div>
            <div class="desc sunk d-flex"><textarea id="dsc" class="flex-grow-1">DF_MSSQL_HANA_DC</textarea><div class="d-flex flex-column" style="margin:1px"><span class="spin raised"></span><span class="spin raised"></span></div></div>
          </div>
        </div>
      </section>

      <section class="problems">
        <div class="btabs d-flex">
          <div class="btab on d-flex align-items-center"><svg class="ic"><use href="#prob"/></svg>Problems<svg class="ms-1" width="12" height="12"><use href="#close"/></svg></div>
          <div class="btab d-flex align-items-center"><svg class="ic"><use href="#refs"/></svg>References Analysis</div>
          <div class="btab d-flex align-items-center"><svg class="ic"><use href="#cyl2"/></svg>Data Cleansing Solutions</div>
          <div class="bfill flex-grow-1 d-flex justify-content-end align-items-center g3"><svg class="ic mb-2"><use href="#tri"/></svg><svg class="ic mb-2"><use href="#min"/></svg><svg class="ic mb-2"><use href="#max"/></svg></div>
        </div>
        <div class="msg">0 errors, 1 warning, 0 others</div>
      </section>
    </main>
  </div>

  <div class="status d-flex align-items-center justify-content-between"><svg class="ic"><use href="#fast"/></svg><i class="vsep"></i></div>
</div>
<div class="vs d-flex flex-column align-items-center">
  <svg width="7" height="4"><use href="#up"/></svg>
  <div style="flex:31"></div>
  <div class="vthumb d-flex align-items-center justify-content-center" style="flex:587"><svg width="8" height="9"><path d="M0 1.500h8M0 4.500h8M0 7.500h8" stroke="#666"/></svg></div>
  <div style="flex:50"></div>
  <svg width="7" height="4"><use href="#dn"/></svg>
</div>
</div>
<div class="hs d-flex align-items-center">
  <svg width="32" height="8"><path d="M10 0v8L6 4z"/></svg>
  <div class="hthumb flex-grow-1 d-flex align-items-center justify-content-center"><svg width="9" height="6"><path d="M1.500 0v6M4.500 0v6M7.500 0v6" stroke="#555"/></svg></div>
  <svg width="35" height="8"><path d="M8 0v8l4-4z"/></svg>
</div>
<script src="https://cdn.jsdelivr.net/npm/bootstrap@5.3.0/dist/js/bootstrap.bundle.min.js"></script>
</body>
</html>
